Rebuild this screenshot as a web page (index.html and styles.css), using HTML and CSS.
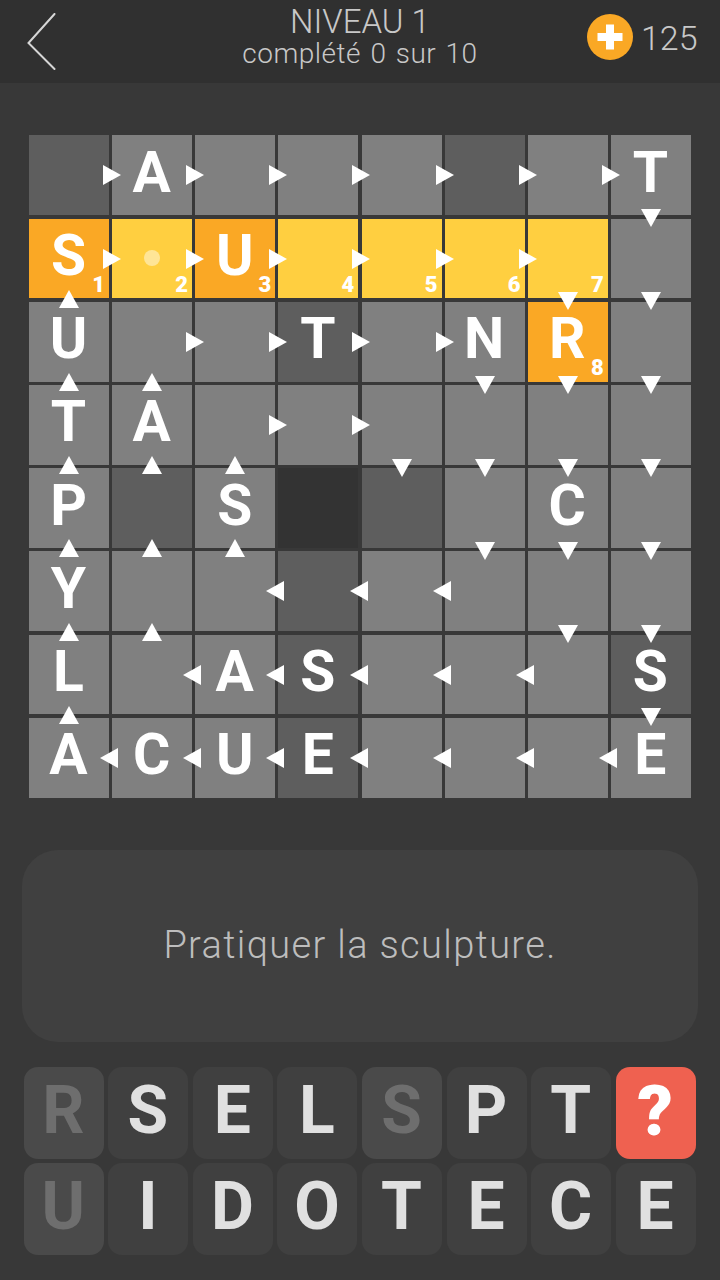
FILE: index.html
```html
<!DOCTYPE html>
<html>
  <head>
    <meta charset="utf-8">
    <title>Niveau 1</title>
    <link rel="stylesheet" href="styles.css">
  </head>
  <body>
    <div class="topBar">
      <svg class="backIcon" width="30" height="58" viewBox="0 0 30 58"><path d="M27.500 1 L1.500 30 L27.500 56" fill="none" stroke="#d6d6d6" stroke-width="2" stroke-linecap="round"/></svg>
      <div class="levelInfo">
        <div class="levelName">NIVEAU 1</div>
        <div class="levelDone">complété 0 sur 10</div>
      </div>
      <div class="coins">
        <svg class="coinIcon" width="46" height="46" viewBox="0 0 46 46"><circle cx="23" cy="23" r="23" fill="#faa825"/><path d="M19 10.500 h8 v8.500 h8.500 v8 h-8.500 v8.500 h-8 v-8.500 h-8.500 v-8 h8.500 z" fill="#fff"/></svg>
        <span class="coinCount">125</span>
      </div>
    </div>

    <div class="board">
      <!-- row 1 -->
      <div class="cell dark"><i class="arrow right"></i></div>
      <div class="cell">A<i class="arrow right"></i></div>
      <div class="cell"><i class="arrow right"></i></div>
      <div class="cell"><i class="arrow right"></i></div>
      <div class="cell"><i class="arrow right"></i></div>
      <div class="cell dark"><i class="arrow right"></i></div>
      <div class="cell"><i class="arrow right"></i></div>
      <div class="cell">T<i class="arrow down"></i></div>
      <!-- row 2 -->
      <div class="cell orange">S<i class="arrow right"></i><b class="num">1</b></div>
      <div class="cell yellow"><span class="dot"></span><i class="arrow right"></i><b class="num">2</b></div>
      <div class="cell orange">U<i class="arrow right"></i><b class="num">3</b></div>
      <div class="cell yellow"><i class="arrow right"></i><b class="num">4</b></div>
      <div class="cell yellow"><i class="arrow right"></i><b class="num">5</b></div>
      <div class="cell yellow"><i class="arrow right"></i><b class="num">6</b></div>
      <div class="cell yellow"><i class="arrow down"></i><b class="num">7</b></div>
      <div class="cell"><i class="arrow down"></i></div>
      <!-- row 3 -->
      <div class="cell">U<i class="arrow up"></i></div>
      <div class="cell"><i class="arrow right"></i></div>
      <div class="cell"><i class="arrow right"></i></div>
      <div class="cell dark">T<i class="arrow right"></i></div>
      <div class="cell"><i class="arrow right"></i></div>
      <div class="cell">N<i class="arrow down"></i></div>
      <div class="cell orange">R<i class="arrow down"></i><b class="num">8</b></div>
      <div class="cell"><i class="arrow down"></i></div>
      <!-- row 4 -->
      <div class="cell">T<i class="arrow up"></i></div>
      <div class="cell">A<i class="arrow up"></i></div>
      <div class="cell"><i class="arrow right"></i></div>
      <div class="cell"><i class="arrow right"></i></div>
      <div class="cell"><i class="arrow down"></i></div>
      <div class="cell"><i class="arrow down"></i></div>
      <div class="cell"><i class="arrow down"></i></div>
      <div class="cell"><i class="arrow down"></i></div>
      <!-- row 5 -->
      <div class="cell">P<i class="arrow up"></i></div>
      <div class="cell dark"><i class="arrow up"></i></div>
      <div class="cell">S<i class="arrow up"></i></div>
      <div class="cell black"></div>
      <div class="cell dark"></div>
      <div class="cell"><i class="arrow down"></i></div>
      <div class="cell">C<i class="arrow down"></i></div>
      <div class="cell"><i class="arrow down"></i></div>
      <!-- row 6 -->
      <div class="cell">Y<i class="arrow up"></i></div>
      <div class="cell"><i class="arrow up"></i></div>
      <div class="cell"><i class="arrow up"></i></div>
      <div class="cell dark"><i class="arrow left"></i></div>
      <div class="cell"><i class="arrow left"></i></div>
      <div class="cell"><i class="arrow left"></i></div>
      <div class="cell"><i class="arrow down"></i></div>
      <div class="cell"><i class="arrow down"></i></div>
      <!-- row 7 -->
      <div class="cell">L<i class="arrow up"></i></div>
      <div class="cell"><i class="arrow up"></i></div>
      <div class="cell">A<i class="arrow left"></i></div>
      <div class="cell dark">S<i class="arrow left"></i></div>
      <div class="cell"><i class="arrow left"></i></div>
      <div class="cell"><i class="arrow left"></i></div>
      <div class="cell"><i class="arrow left"></i></div>
      <div class="cell dark">S<i class="arrow down"></i></div>
      <!-- row 8 -->
      <div class="cell">A<i class="arrow up"></i></div>
      <div class="cell">C<i class="arrow left"></i></div>
      <div class="cell">U<i class="arrow left"></i></div>
      <div class="cell dark">E<i class="arrow left"></i></div>
      <div class="cell"><i class="arrow left"></i></div>
      <div class="cell"><i class="arrow left"></i></div>
      <div class="cell"><i class="arrow left"></i></div>
      <div class="cell">E<i class="arrow left"></i></div>
    </div>

    <div class="hint">Pratiquer la sculpture.</div>

    <div class="keys">
      <div class="key used">R</div>
      <div class="key">S</div>
      <div class="key">E</div>
      <div class="key">L</div>
      <div class="key used">S</div>
      <div class="key">P</div>
      <div class="key">T</div>
      <div class="key help">?</div>
      <div class="key used">U</div>
      <div class="key">I</div>
      <div class="key">D</div>
      <div class="key">O</div>
      <div class="key">T</div>
      <div class="key">E</div>
      <div class="key">C</div>
      <div class="key">E</div>
    </div>
  </body>
</html>
```

FILE: styles.css
```css
html, body{
  margin: 0;
  padding: 0;
}
body{
  width: 720px;
  height: 1280px;
  overflow: hidden;
  background-color: #383838;
  font-family: Roboto, sans-serif;
}
.topBar{
  position: relative;
  display: flex;
  align-items: center;
  justify-content: center;
  height: 83px;
  background-color: #303030;
}
.backIcon{
  position: absolute;
  left: 27px;
  top: 13px;
}
.levelInfo{
  padding-bottom: 10px;
  text-align: center;
  font-weight: 300;
  color: #c8c8c8;
}
.levelName{
  font-size: 33px;
  line-height: 34px;
}
.levelDone{
  font-size: 28px;
  line-height: 30px;
  letter-spacing: 0.5px;
  word-spacing: 2px;
}
.coins{
  position: absolute;
  left: 587px;
  top: 14px;
  display: flex;
  align-items: center;
  gap: 8px;
}
.coinCount{
  padding-top: 2px;
  font-size: 34px;
  font-weight: 300;
  color: #c8c8c8;
}
.board{
  display: grid;
  grid-template-columns: repeat(8, 80px);
  grid-template-rows: repeat(8, 79.8px);
  column-gap: 3.14px;
  row-gap: 3.4px;
  margin: 52.4px 0 0 29px;
}
.cell{
  position: relative;
  display: flex;
  align-items: center;
  justify-content: center;
  padding: 0 1px 6px 0;
  background-color: #808080;
  color: #fff;
  font-size: 57px;
  font-weight: 700;
}
.dark{
  background-color: #5e5e5e;
}
.black{
  background-color: #333;
}
.orange{
  background-color: #faa825;
}
.yellow{
  background-color: #ffcf40;
}
.dot{
  width: 16px;
  height: 16px;
  margin: 6px 0 0 1px;
  border-radius: 50%;
  background-color: #ffe596;
}
.num{
  position: absolute;
  right: 4px;
  bottom: 1.5px;
  font-size: 22px;
  line-height: 24px;
}
.arrow{
  position: absolute;
  z-index: 1;
  width: 0;
  height: 0;
  border-style: solid;
  border-color: transparent;
}
.right{
  right: -12px;
  top: 30px;
  border-width: 10px 0 10px 18px;
  border-left-color: #fff;
}
.left{
  left: -12px;
  top: 30px;
  border-width: 10px 18px 10px 0;
  border-right-color: #fff;
}
.down{
  bottom: -12px;
  left: 30px;
  border-width: 18px 10px 0 10px;
  border-top-color: #fff;
}
.up{
  top: -12px;
  left: 30px;
  border-width: 0 10px 18px 10px;
  border-bottom-color: #fff;
}
.hint{
  display: flex;
  align-items: center;
  justify-content: center;
  width: 676px;
  height: 192px;
  margin: 52.4px 0 0 22px;
  padding-bottom: 2px;
  box-sizing: border-box;
  border-radius: 36px;
  background-color: #404040;
  color: #bdbdbd;
  font-size: 38px;
  font-weight: 300;
  letter-spacing: 1.35px;
}
.keys{
  display: grid;
  grid-template-columns: repeat(8, 80px);
  grid-template-rows: repeat(2, 92px);
  column-gap: 4.55px;
  row-gap: 4px;
  margin: 25px 0 0 23.8px;
}
.key{
  display: flex;
  align-items: center;
  justify-content: center;
  padding: 0 1px 4px 0;
  border-radius: 14px;
  background-color: #404040;
  color: #e0e0e0;
  font-size: 66px;
  font-weight: 700;
}
.used{
  background-color: #4a4a4a;
  color: #6e6e6e;
}
.help{
  background-color: #ef6150;
  color: #fff;
  font-size: 70px;
  font-weight: 900;
}
```
